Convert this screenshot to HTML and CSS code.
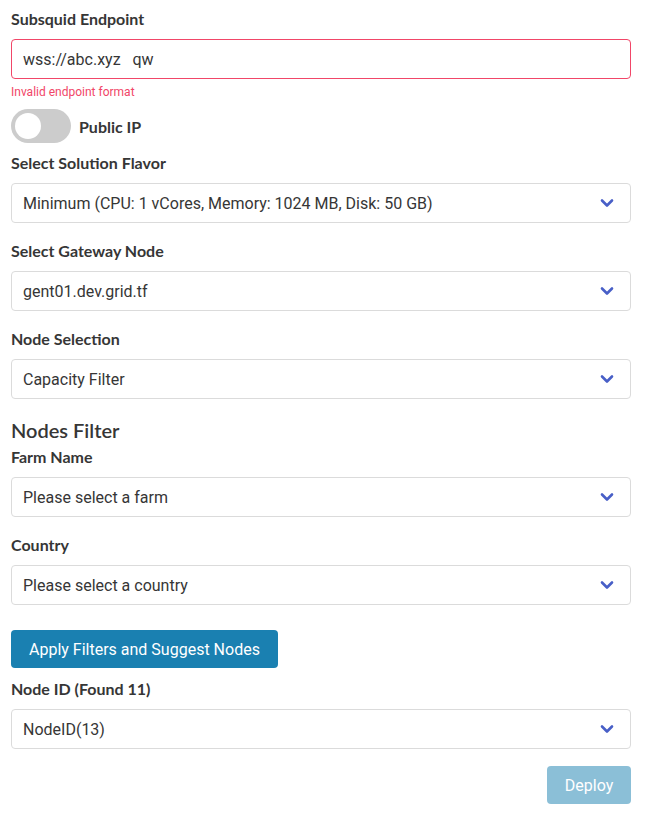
FILE: index.html
```html
<!DOCTYPE html>
<html>
<head>
	<meta charset="utf-8">
	<title>Subsquid</title>
	<link rel="stylesheet" href="styles.css">
</head>
<body>
	<div class="form">
		<div class="field">
			<label class="label">Subsquid Endpoint</label>
			<input class="input is-danger" type="text" value="wss://abc.xyz   qw">
			<p class="help">Invalid endpoint format</p>
		</div>

		<div class="switch-row">
			<span class="switch"><span class="knob"></span></span>
			<span class="switch-label">Public IP</span>
		</div>

		<div class="field">
			<label class="label">Select Solution Flavor</label>
			<div class="select">
				<span>Minimum (CPU: 1 vCores, Memory: 1024 MB, Disk: 50 GB)</span>
				<svg class="arrow" width="14" height="10" viewBox="0 0 14 10"><polyline points="2,2.5 7,7.5 12,2.5" /></svg>
			</div>
		</div>

		<div class="field">
			<label class="label">Select Gateway Node</label>
			<div class="select">
				<span>gent01.dev.grid.tf</span>
				<svg class="arrow" width="14" height="10" viewBox="0 0 14 10"><polyline points="2,2.5 7,7.5 12,2.5" /></svg>
			</div>
		</div>

		<div class="field">
			<label class="label">Node Selection</label>
			<div class="select">
				<span>Capacity Filter</span>
				<svg class="arrow" width="14" height="10" viewBox="0 0 14 10"><polyline points="2,2.5 7,7.5 12,2.5" /></svg>
			</div>
		</div>

		<h2 class="title">Nodes Filter</h2>

		<div class="field">
			<label class="label">Farm Name</label>
			<div class="select">
				<span>Please select a farm</span>
				<svg class="arrow" width="14" height="10" viewBox="0 0 14 10"><polyline points="2,2.5 7,7.5 12,2.5" /></svg>
			</div>
		</div>

		<div class="field">
			<label class="label">Country</label>
			<div class="select">
				<span>Please select a country</span>
				<svg class="arrow" width="14" height="10" viewBox="0 0 14 10"><polyline points="2,2.5 7,7.5 12,2.5" /></svg>
			</div>
		</div>

		<button class="button primary suggest">Apply Filters and Suggest Nodes</button>

		<div class="field">
			<label class="label">Node ID (Found 11)</label>
			<div class="select">
				<span>NodeID(13)</span>
				<svg class="arrow" width="14" height="10" viewBox="0 0 14 10"><polyline points="2,2.5 7,7.5 12,2.5" /></svg>
			</div>
		</div>

		<div class="actions">
			<button class="button primary" disabled>Deploy</button>
		</div>
	</div>
</body>
</html>
```

FILE: styles.css
```css
body{
	margin: 0;
	background: #fff;
	color: #363636;
	font-family: Roboto, "Noto Sans", sans-serif;
	font-size: 16px;
}

.form{
	width: 620px;
	margin-left: 11px;
	padding-top: 7px;
}

/* labels and fields */
.field{
	margin-bottom: 16px;
}

.label{
	display: block;
	font-family: Lato, sans-serif;
	font-weight: 700;
	font-size: 16px;
	line-height: 24px;
	margin-bottom: 8px;
	color: #363636;
}

.input{
	display: block;
	box-sizing: border-box;
	width: 100%;
	height: 40px;
	padding: 0 11px;
	font-family: Roboto, sans-serif;
	font-size: 16px;
	color: #363636;
	border: 1px solid #dbdbdb;
	border-radius: 4px;
	outline: none;
}

.input.is-danger{
	border-color: #f14668;
}

.help{
	margin: 5px 0 0;
	font-size: 12px;
	line-height: 16px;
	color: #f14668;
}

.field:first-child{
	margin-bottom: 9px;
}

/* toggle */
.switch-row{
	display: flex;
	align-items: center;
	gap: 8px;
	margin-bottom: 8px;
}

.switch{
	display: inline-flex;
	align-items: center;
	box-sizing: border-box;
	width: 60px;
	height: 34px;
	padding: 0 4px;
	border-radius: 17px;
	background: #cccccc;
}

.knob{
	width: 26px;
	height: 26px;
	border-radius: 50%;
	background: #fff;
}

.switch-label{
	font-family: Lato, sans-serif;
	font-weight: 700;
	font-size: 16px;
}

/* select boxes */
.select{
	display: flex;
	align-items: center;
	justify-content: space-between;
	box-sizing: border-box;
	height: 40px;
	padding: 0 16px 0 11px;
	border: 1px solid #dbdbdb;
	border-radius: 4px;
	font-size: 16px;
}

.arrow polyline{
	fill: none;
	stroke: #485fc7;
	stroke-width: 2.6;
	stroke-linecap: round;
	stroke-linejoin: round;
}

.title{
	margin: 16px 0 0;
	font-family: Lato, sans-serif;
	font-weight: 600;
	font-size: 20px;
	line-height: 30px;
}

/* buttons */
.button{
	display: block;
	height: 38px;
	padding: 0 17px;
	border: 0;
	border-radius: 4px;
	font-family: Roboto, sans-serif;
	font-size: 16px;
	color: #fff;
	cursor: pointer;
}

.button.primary{
	background: #1a80b1;
}

.button:disabled{
	opacity: 0.5;
	cursor: default;
}

/* margins collapse with the field above */
.button.suggest{
	margin-top: 25px;
	margin-bottom: 9px;
	padding: 0 18px;
}

.actions{
	display: flex;
	justify-content: flex-end;
	margin-top: 17px;
}

.actions .button{
	width: 84px;
}
```
